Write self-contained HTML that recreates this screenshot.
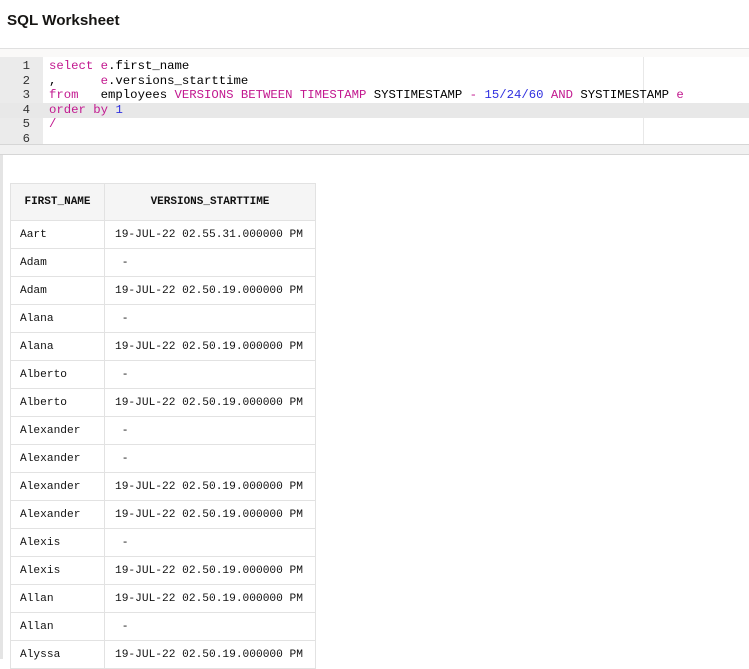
<!DOCTYPE html>
<html><head><style>
*{margin:0;padding:0;box-sizing:border-box}
body{width:749px;height:659px;overflow:hidden;background:#fff;font-family:"Liberation Sans",sans-serif;position:relative}
.title{position:absolute;left:7px;top:12px;font-size:15.2px;font-weight:bold;color:#161513}
.band{position:absolute;left:0;top:48px;width:749px;height:9px;background:#faf9f8;border-top:1px solid #e0e0e0}
.ed{position:absolute;left:0;top:57px;width:749px;height:87px;overflow:hidden;font-family:"Liberation Mono",monospace;font-size:12.3px}
.gut{position:absolute;left:0;top:0;width:43px;height:100%;background:#ebebeb}
.ruler{position:absolute;left:643px;top:0;width:1px;height:100%;background:#e8e8e8}
.hl{position:absolute;left:0;top:46px;width:749px;height:15px;background:#e8e8e8}
.ln{position:absolute;left:0;width:30px;text-align:right;color:#333}
.cd{position:absolute;left:49px;white-space:pre;color:#000}
.k{color:#c2188f}.n{color:#3030e0}
.sep{position:absolute;left:0;top:144px;width:749px;height:11px;background:#f1f1f1;border-top:1px solid #d6d6d6;border-bottom:1px solid #d6d6d6}
.res{position:absolute;left:0;top:155px;width:3px;height:504px;background:#e4e4e4}
table{position:absolute;left:10px;top:183px;border-collapse:collapse;font-family:"Liberation Mono",monospace;font-size:11.2px;color:#111;table-layout:fixed;width:305px}
td,th{border:1px solid #e2e2e2;height:28px;padding:0 9px;white-space:nowrap;text-align:left;overflow:hidden}
th{height:37px;background:#f5f5f5;font-weight:bold;text-align:center;font-size:11px}
td.d{padding-left:10px;padding-right:0}
tr.dk td{border-top:1px solid #c8c8c8}
</style></head><body>
<div class="title">SQL Worksheet</div>
<div class="band"></div>
<div class="ed">
<div class="gut"></div>
<div class="hl"></div>
<div class="ruler"></div>
<div class="ln" style="top:2px">1</div>
<div class="ln" style="top:16.5px">2</div>
<div class="ln" style="top:31px">3</div>
<div class="ln" style="top:45.5px">4</div>
<div class="ln" style="top:60px">5</div>
<div class="ln" style="top:74.5px">6</div>
<div class="cd" style="top:2px"><span class="k">select</span> <span class="k">e</span>.first_name</div>
<div class="cd" style="top:16.5px">,      <span class="k">e</span>.versions_starttime</div>
<div class="cd" style="top:31px"><span class="k">from</span>   employees <span class="k">VERSIONS BETWEEN TIMESTAMP</span> SYSTIMESTAMP <span class="k">-</span> <span class="n">15/24/60</span> <span class="k">AND</span> SYSTIMESTAMP <span class="k">e</span></div>
<div class="cd" style="top:45.5px"><span class="k">order by</span> <span class="n">1</span></div>
<div class="cd" style="top:60px"><span class="k">/</span></div>
</div>
<div class="sep"></div>
<div class="res"></div>
<table>
<colgroup><col style="width:94px"><col style="width:211px"></colgroup>
<tr><th>FIRST_NAME</th><th>VERSIONS_STARTTIME</th></tr>
<tr><td>Aart</td><td class="d">19-JUL-22 02.55.31.000000 PM</td></tr>
<tr><td>Adam</td><td class="d">&nbsp;-</td></tr>
<tr><td>Adam</td><td class="d">19-JUL-22 02.50.19.000000 PM</td></tr>
<tr><td>Alana</td><td class="d">&nbsp;-</td></tr>
<tr><td>Alana</td><td class="d">19-JUL-22 02.50.19.000000 PM</td></tr>
<tr><td>Alberto</td><td class="d">&nbsp;-</td></tr>
<tr><td>Alberto</td><td class="d">19-JUL-22 02.50.19.000000 PM</td></tr>
<tr class="dk"><td>Alexander</td><td class="d">&nbsp;-</td></tr>
<tr><td>Alexander</td><td class="d">&nbsp;-</td></tr>
<tr><td>Alexander</td><td class="d">19-JUL-22 02.50.19.000000 PM</td></tr>
<tr><td>Alexander</td><td class="d">19-JUL-22 02.50.19.000000 PM</td></tr>
<tr><td>Alexis</td><td class="d">&nbsp;-</td></tr>
<tr><td>Alexis</td><td class="d">19-JUL-22 02.50.19.000000 PM</td></tr>
<tr><td>Allan</td><td class="d">19-JUL-22 02.50.19.000000 PM</td></tr>
<tr><td>Allan</td><td class="d">&nbsp;-</td></tr>
<tr class="dk"><td>Alyssa</td><td class="d">19-JUL-22 02.50.19.000000 PM</td></tr>
</table>
</body></html>
